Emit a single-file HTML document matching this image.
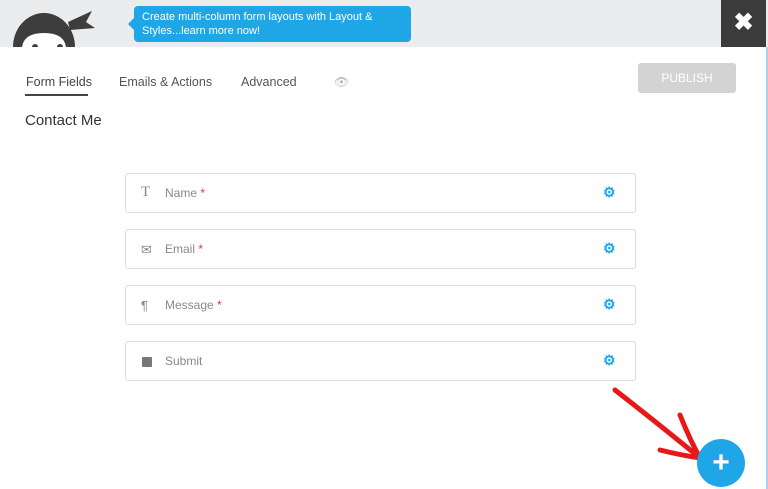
<!DOCTYPE html>
<html><head><meta charset="utf-8"><style>
body{margin:0;width:768px;height:489px;overflow:hidden;background:#fff;font-family:"Liberation Sans",sans-serif;position:relative}
.hdr{position:absolute;left:0;top:0;width:768px;height:47px;background:#ebeced}
.close{position:absolute;left:721px;top:0;width:45px;height:47px;background:#3b3b3b;color:#fff;font-size:24px;font-weight:bold;text-align:center;line-height:46px}
.tip{position:absolute;left:134px;top:6px;width:277px;height:36px;background:#1ea6e6;border-radius:4px;color:#fff;font-size:11px;line-height:14px;padding:4px 8px;box-sizing:border-box}
.tip:before{content:"";position:absolute;left:-6px;top:12px;border:6px solid transparent;border-left:0;border-right-color:#1ea6e6}
.tab{position:absolute;top:75px;font-size:12.5px;color:#555}
.field{position:absolute;left:125px;width:511px;height:40px;border:1px solid #dcdcdc;border-radius:3px;box-sizing:border-box}
.field .lbl{position:absolute;left:39px;top:12px;font-size:12px;color:#888}
.field .lbl b{color:#e33;font-weight:normal}
.field .ic{position:absolute;left:15px;top:12px;color:#888;font-size:13px}
.gear{position:absolute;left:477px;top:10px;color:#1ea6e6;font-size:14px;font-weight:bold}
</style></head><body>
<div class="hdr"></div>
<svg style="position:absolute;left:0;top:0" width="100" height="47">
<path d="M13 47 A31 34 0 0 1 75 47 Z" fill="#3d3d3d"/>
<path d="M68 22 L92 11 L86 22 L95 28 L70 30 Z" fill="#3d3d3d"/>
<path d="M22 47 Q24 33 44 33 Q64 33 66 47 Z" fill="#fff"/>
<circle cx="35" cy="47" r="3" fill="#3d3d3d"/><circle cx="60" cy="47" r="3" fill="#3d3d3d"/>
</svg>
<div class="tip">Create multi-column form layouts with Layout &amp;<br>Styles...learn more now!</div>
<div class="close">✖</div>
<div style="position:absolute;left:766px;top:47px;width:2px;height:442px;background:#a9d3f3"></div>
<div class="tab" style="left:26px;color:#444">Form Fields</div>
<div style="position:absolute;left:25px;top:94px;width:63px;height:2px;background:#444"></div>
<div class="tab" style="left:119px">Emails &amp; Actions</div>
<div class="tab" style="left:241px">Advanced</div>
<div class="tab" style="left:334px;color:#bbb;font-size:12px">👁</div>
<div style="position:absolute;left:638px;top:63px;width:98px;height:30px;background:#d3d3d3;border-radius:3px;color:#fff;font-size:12px;text-align:center;line-height:30px">PUBLISH</div>
<div style="position:absolute;left:25px;top:112px;font-size:15px;color:#333">Contact Me</div>
<div class="field" style="top:173px"><span class="ic" style="font-family:'Liberation Serif',serif;font-size:15px;top:10px">T</span><span class="lbl">Name <b>*</b></span><span class="gear">⚙</span></div>
<div class="field" style="top:229px"><span class="ic">✉</span><span class="lbl">Email <b>*</b></span><span class="gear">⚙</span></div>
<div class="field" style="top:285px"><span class="ic">¶</span><span class="lbl">Message <b>*</b></span><span class="gear">⚙</span></div>
<div class="field" style="top:341px"><span style="position:absolute;left:16px;top:15px;width:10px;height:10px;background:#777;border-radius:1px"></span><span class="lbl">Submit</span><span class="gear">⚙</span></div>
<svg style="position:absolute;left:600px;top:380px" width="120" height="90">
<path d="M15 10 Q60 45 100 78 M80 35 Q90 60 100 78 Q80 75 60 70" stroke="#e8181a" stroke-width="5" fill="none" stroke-linecap="round"/>
</svg>
<div style="position:absolute;left:697px;top:439px;width:48px;height:48px;border-radius:50%;background:#1ea6e6;color:#fff;font-size:30px;font-weight:bold;text-align:center;line-height:47px">+</div>
</body></html>
